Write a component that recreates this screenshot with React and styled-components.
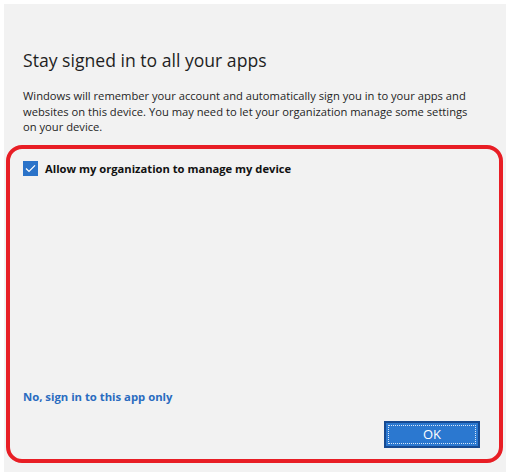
import React from "react";
import styled, { createGlobalStyle } from "styled-components";

const Global = createGlobalStyle`
  html, body { margin: 0; padding: 0; background: #ffffff; }
  body { font-family: "Open Sans", "Noto Sans", "Liberation Sans", sans-serif; }
  * { box-sizing: border-box; }
`;

const Panel = styled.div`
  margin: 4px 2px 0 4px;
  height: 468px;
  background: #f2f2f2;
  display: flex;
  flex-direction: column;
  padding-top: 43px;
`;

const Header = styled.div`
  padding: 0 20px 0 19px;
`;

const Title = styled.h1`
  margin: 0;
  font-size: 17.6px;
  font-weight: 400;
  line-height: 26px;
  color: #1f1f1f;
`;

const Desc = styled.p`
  margin: 15px 0 0;
  font-size: 11.2px;
  line-height: 15.6px;
  color: #1f1f1f;
`;

const Frame = styled.section`
  margin: 10px 3px 0 2px;
  height: 318px;
  border: 4px solid #e81e25;
  border-radius: 16px;
  padding: 12px 19px 11px 13px;
  display: flex;
  flex-direction: column;
`;

const CheckRow = styled.label`
  display: flex;
  align-items: center;
  gap: 7px;
  font-size: 11.2px;
  font-weight: 700;
  color: #111;
`;

const Box = styled.span`
  width: 15px;
  height: 15px;
  background: #2b73c9;
  display: flex;
  align-items: center;
  justify-content: center;
  flex: none;
`;

const Link = styled.a`
  margin-top: auto;
  font-size: 11.3px;
  font-weight: 700;
  color: #2a6cc0;
  text-decoration: none;
  line-height: 16px;
`;

const ButtonRow = styled.div`
  display: flex;
  justify-content: flex-end;
  margin-top: 16px;
`;

const OkButton = styled.button`
  width: 96px;
  height: 27px;
  background: #2b78d0;
  border: 2px solid #174a91;
  padding: 2px;
  display: flex;
  font-family: inherit;
  cursor: pointer;
`;

const Focus = styled.span`
  flex: 1;
  border: 1px dotted #d8e6f7;
  color: #fff;
  font-size: 13px;
  display: flex;
  align-items: center;
  justify-content: center;
`;

export default function App() {
  return (
    <>
      <Global />
      <Panel>
        <Header>
          <Title>Stay signed in to all your apps</Title>
          <Desc>
            Windows will remember your account and automatically sign you in to your apps and
            <br />
            websites on this device. You may need to let your organization manage some settings
            <br />
            on your device.
          </Desc>
        </Header>
        <Frame>
          <CheckRow>
            <Box>
              <svg width="11" height="9" viewBox="0 0 11 9">
                <path d="M1 4.6 L4 7.4 L10 1.4" fill="none" stroke="#fff" strokeWidth="1.3" />
              </svg>
            </Box>
            Allow my organization to manage my device
          </CheckRow>
          <Link href="#">No, sign in to this app only</Link>
          <ButtonRow>
            <OkButton>
              <Focus>OK</Focus>
            </OkButton>
          </ButtonRow>
        </Frame>
      </Panel>
    </>
  );
}
